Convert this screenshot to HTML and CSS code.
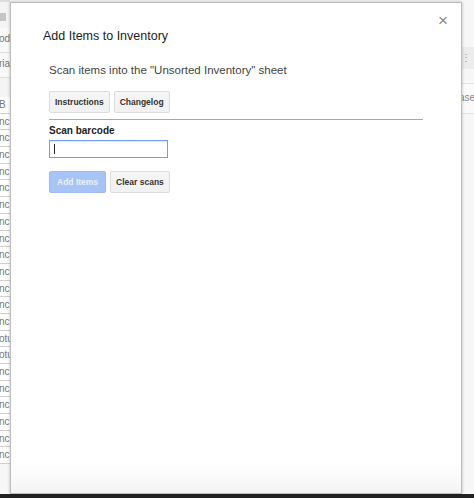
FILE: index.html
```html
<!DOCTYPE html>
<html>
<head>
    <meta charset="UTF-8">
    <title>Add Items to Inventory</title>
    <link rel="stylesheet" href="styles.css">
</head>
<body>
<div class="screen">
    <div class="sheet-left">
        <div class="cell cell-icon"><span class="square"></span></div>
        <div class="cell cell-top">od</div>
        <div class="cell cell-top">ria</div>
        <div class="cell cell-gap"></div>
        <div class="cell">B</div>
        <div class="cell">nc</div>
        <div class="cell">nc</div>
        <div class="cell">nc</div>
        <div class="cell">nc</div>
        <div class="cell">nc</div>
        <div class="cell">nc</div>
        <div class="cell">nc</div>
        <div class="cell">nc</div>
        <div class="cell">nc</div>
        <div class="cell">nc</div>
        <div class="cell">nc</div>
        <div class="cell">nc</div>
        <div class="cell">nc</div>
        <div class="cell">otu</div>
        <div class="cell">otu</div>
        <div class="cell">nc</div>
        <div class="cell">nc</div>
        <div class="cell">nc</div>
        <div class="cell">nc</div>
        <div class="cell">nc</div>
        <div class="cell">nc</div>
    </div>

    <div class="dialog">
        <span class="close">&times;</span>
        <h2 class="title">Add Items to Inventory</h2>
        <div class="body">
            <p class="intro">Scan items into the "Unsorted Inventory" sheet</p>
            <div class="btn-row">
                <button type="button" class="btn">Instructions</button>
                <button type="button" class="btn">Changelog</button>
            </div>
            <div class="rule"></div>
            <label class="label" for="barcode">Scan barcode</label>
            <div class="input"><span class="caret"></span></div>
            <div class="btn-row btn-row-lower">
                <button type="button" class="btn btn-blue">Add Items</button>
                <button type="button" class="btn">Clear scans</button>
            </div>
        </div>
    </div>

    <div class="sheet-right">
        <div class="rcell rcell-top"></div>
        <div class="rcell rcell-bar"><span class="dots">&#8942;</span><span class="dash">-</span></div>
        <div class="rcell rcell-mid"></div>
        <div class="rcell">ase</div>
    </div>
</div>
<div class="dock"></div>
</body>
</html>
```

FILE: styles.css
```css
body {
    margin: 0;
    font-family: "Liberation Sans", Arial, sans-serif;
    background-color: #f4f4f4;
    width: 474px;
    height: 498px;
    overflow: hidden;
}
.screen {
    display: flex;
    height: 494px;
}
.sheet-left {
    width: 10px;
    overflow: hidden;
    background-color: #f7f7f7;
    display: flex;
    flex-direction: column;
    border-top: 2px solid #dcdcdc;
}
.cell {
    height: 16.7px;
    flex: none;
    border-bottom: 1px solid #cfcfcf;
    box-sizing: border-box;
    font-size: 10px;
    line-height: 16px;
    color: #777;
    white-space: nowrap;
    text-indent: -1px;
    background-color: #fff;
}
.cell-icon {
    height: 26px;
    border-bottom: none;
    background-color: #f4f4f4;
    padding-top: 11px;
}
.square {
    display: block;
    width: 6px;
    height: 8px;
    background-color: #c6c6c6;
}
.cell-top {
    height: 25px;
    line-height: 22px;
    background-color: #f9f9f9;
    border-bottom-color: #dedede;
}
.cell-gap {
    height: 19px;
    border-bottom: none;
    background-color: #f4f4f4;
}
.dialog {
    position: relative;
    width: 418px;
    height: 490px;
    margin-top: 2px;
    border: 1px solid #bdbdbd;
    background: linear-gradient(to bottom, #fff 0, #fff 94%, #f3f3f3 100%);
    box-shadow: 0 0 3px rgba(0,0,0,0.25);
    padding-left: 32px;
}
.close {
    position: absolute;
    top: 9px;
    right: 13px;
    font-size: 17px;
    line-height: 17px;
    color: #888;
}
.title {
    margin: 25px 0 0 0;
    font-size: 12.5px;
    line-height: 16px;
    font-weight: normal;
    color: #222;
}
.body {
    padding-left: 6px;
}
.intro {
    margin: 19px 0 0 0;
    font-size: 11.5px;
    line-height: 14px;
    color: #444;
}
.btn-row {
    display: flex;
    gap: 4px;
    margin-top: 14px;
}
.btn-row-lower {
    margin-top: 13px;
}
.btn {
    height: 22px;
    padding: 0 5px;
    border: 1px solid #dcdcdc;
    border-radius: 2px;
    background: linear-gradient(to bottom, #f6f6f6, #f1f1f1);
    font-family: "Liberation Sans", Arial, sans-serif;
    font-size: 8.5px;
    font-weight: bold;
    color: #333;
}
.btn-blue {
    background: #a7c4f6;
    border-color: #9dbcf3;
    color: #e8f0fd;
    padding: 0 7px;
}
.rule {
    width: 374px;
    height: 1px;
    margin-top: 6px;
    background-color: #a9a9a9;
}
.label {
    display: block;
    margin-top: 5px;
    font-size: 10px;
    line-height: 12px;
    font-weight: bold;
    color: #222;
}
.input {
    width: 119px;
    height: 18px;
    margin-top: 3px;
    box-sizing: border-box;
    border: 1px solid #6f9ef0;
    box-shadow: inset 0 1px 1px rgba(0,0,0,0.08);
    padding: 3px 0 0 4px;
}
.caret {
    display: block;
    width: 1px;
    height: 10px;
    background-color: #222;
}
.sheet-right {
    flex: 1;
    overflow: hidden;
    background-color: #f7f7f7;
    display: flex;
    flex-direction: column;
}
.rcell {
    height: 30px;
    flex: none;
    box-sizing: border-box;
    border-bottom: 1px solid #e2e2e2;
    font-size: 10px;
    line-height: 28px;
    color: #888;
    white-space: nowrap;
    text-indent: -3px;
    background-color: #fafafa;
}
.rcell-top {
    height: 47px;
    border-bottom: none;
    background-color: #f7f7f7;
}
.rcell-bar {
    height: 22px;
    line-height: 22px;
    background-color: #ececec;
    text-indent: 0;
    color: #999;
    border-bottom: none;
}
.dots {
    margin-left: -1px;
}
.dash {
    margin-left: 4px;
}
.rcell-mid {
    height: 15px;
    background-color: #f7f7f7;
}
.dock {
    height: 4px;
    background-color: #222;
}
```
